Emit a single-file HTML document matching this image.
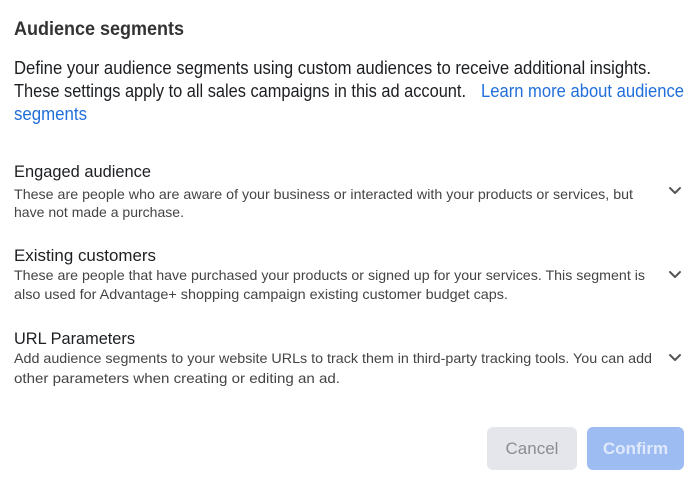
<!DOCTYPE html>
<html><head><meta charset="utf-8"><style>
html,body{margin:0;padding:0;background:#fff;width:700px;height:483px;overflow:hidden}
svg{display:block}
text{font-family:"Liberation Sans",Arial,sans-serif}
</style></head><body>
<svg width="700" height="483" viewBox="0 0 700 483" xmlns="http://www.w3.org/2000/svg">
<g fill="#1c1e21">
<text x="14" y="35" font-size="19" font-weight="bold" fill="#333" textLength="170" lengthAdjust="spacingAndGlyphs">Audience segments</text>
<text x="14" y="74" font-size="18" textLength="637" lengthAdjust="spacingAndGlyphs">Define your audience segments using custom audiences to receive additional insights.</text>
<text x="14" y="97" font-size="18" textLength="452" lengthAdjust="spacingAndGlyphs">These settings apply to all sales campaigns in this ad account.</text>
<text x="481" y="97" font-size="18" fill="#216fdb" textLength="203" lengthAdjust="spacingAndGlyphs">Learn more about audience</text>
<text x="14" y="120" font-size="18" fill="#216fdb" textLength="73" lengthAdjust="spacingAndGlyphs">segments</text>

<text x="14" y="177" font-size="17" textLength="137" lengthAdjust="spacingAndGlyphs">Engaged audience</text>
<g fill="#444" font-size="14">
<text x="14" y="199" textLength="619" lengthAdjust="spacingAndGlyphs">These are people who are aware of your business or interacted with your products or services, but</text>
<text x="14" y="217" textLength="170" lengthAdjust="spacingAndGlyphs">have not made a purchase.</text>
</g>
<text x="14" y="261" font-size="17" textLength="142" lengthAdjust="spacingAndGlyphs">Existing customers</text>
<g fill="#444" font-size="14">
<text x="14" y="280" textLength="631" lengthAdjust="spacingAndGlyphs">These are people that have purchased your products or signed up for your services. This segment is</text>
<text x="14" y="299" textLength="494" lengthAdjust="spacingAndGlyphs">also used for Advantage+ shopping campaign existing customer budget caps.</text>
</g>
<text x="14" y="344" font-size="17" textLength="121" lengthAdjust="spacingAndGlyphs">URL Parameters</text>
<g fill="#444" font-size="14">
<text x="14" y="363" textLength="638" lengthAdjust="spacingAndGlyphs">Add audience segments to your website URLs to track them in third-party tracking tools. You can add</text>
<text x="14" y="383" textLength="326" lengthAdjust="spacingAndGlyphs">other parameters when creating or editing an ad.</text>
</g>
</g>
<g fill="none" stroke="#555" stroke-width="2" stroke-linecap="round" stroke-linejoin="round">
<path d="M670 188 L675 193 L680 188"/>
<path d="M670 272 L675 277 L680 272"/>
<path d="M670 355 L675 360 L680 355"/>
</g>
<rect x="487" y="427" width="90" height="43" rx="6" fill="#e4e6eb"/>
<text x="532" y="454" font-size="17" fill="#8a8d91" text-anchor="middle">Cancel</text>
<rect x="587" y="427" width="97" height="43" rx="6" fill="#9dbcf2"/>
<text x="635.5" y="454" font-size="17" font-weight="bold" fill="#dfe9fb" text-anchor="middle">Confirm</text>
</svg>
</body></html>
